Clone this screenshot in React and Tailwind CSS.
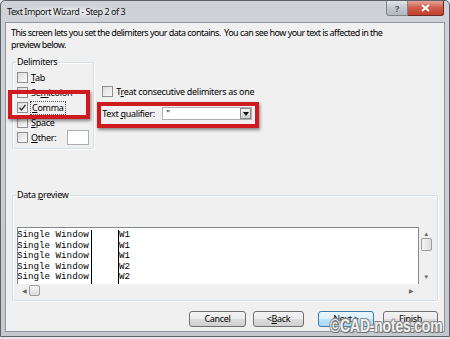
import React from "react";

function Box({ checked }) {
  return (
    <span className="w-[11px] h-[11px] shrink-0 border border-[#8f8f8f] bg-[linear-gradient(135deg,#dcdcdc,#fbfbfb)] flex items-center justify-center">
      {checked && (
        <svg width="9" height="9" viewBox="0 0 9 9">
          <path d="M1.5 4.8 L3.5 7 L7.5 1.8" stroke="#2a2a2a" strokeWidth="1.3" fill="none" />
        </svg>
      )}
    </span>
  );
}

function Btn({ children, primary, w }) {
  return (
    <div
      className={
        "h-[16px] rounded-[3px] border flex items-center justify-center whitespace-nowrap " +
        (primary
          ? "border-[#3d7bad] bg-[linear-gradient(180deg,#eaf6fd,#d9f0fc_50%,#bee6fd_51%,#a7d9f5)]"
          : "border-[#707070] bg-[linear-gradient(180deg,#f2f2f2,#ebebeb_50%,#dddddd_51%,#cfcfcf)]")
      }
      style={{ width: w }}
    >
      {children}
    </div>
  );
}

export default function App() {
  const rows = ["W1", "W1", "W1", "W2", "W2"];
  return (
    <div className="w-[450px] h-[339px] bg-[#e4e6e8] relative overflow-hidden font-['Noto_Sans',sans-serif] text-[9px] tracking-[-0.3px] leading-[12px] text-black">
      <div className="flex flex-col w-[450px] h-[337px] border border-[#5d6268] rounded-t-[5px] bg-[linear-gradient(180deg,#cfd3d7,#c4c9ce)] px-[4px] pb-[4px]">
        {/* title bar */}
        <div className="h-[21px] flex items-start shrink-0">
          <div className="mt-[5px] ml-[0px] px-[2px] rounded-[6px] bg-[radial-gradient(ellipse_at_center,rgba(255,255,255,0.75),rgba(255,255,255,0)_75%)] text-[9px] tracking-[-0.45px] leading-[12px] text-[#111] whitespace-nowrap">
            Text Import Wizard - Step 2 of 3
          </div>
          <div className="ml-auto mr-[1px] flex">
            <div className="w-[22px] h-[15px] rounded-bl-[3px] border border-[#7c8389] border-t-0 bg-[linear-gradient(180deg,#e2e5e8,#c2c8ce_50%,#b2b9c0)] flex items-center justify-center text-[9px] leading-none text-[#555] font-bold">
              ?
            </div>
            <div className="w-[36px] h-[15px] rounded-br-[3px] border border-[#6c2a22] border-t-0 border-l-0 bg-[linear-gradient(180deg,#e6a59a,#cf5a48_50%,#c2402e)] flex items-center justify-center">
              <svg width="9" height="8" viewBox="0 0 9 8">
                <path d="M1 1 L8 7 M8 1 L1 7" stroke="#fff" strokeWidth="2" />
              </svg>
            </div>
          </div>
        </div>

        {/* client area */}
        <div className="flex-1 bg-[#f0f0f0] border border-[#8e959c] flex flex-col px-[6px]">
          <div className="mt-[4px] ml-[-1px] whitespace-nowrap tracking-[-0.55px]">
            <div>This screen lets you set the delimiters your data contains.&nbsp; You can see how your text is affected in the</div>
            <div>preview below.</div>
          </div>

          <div className="flex mt-[5px]">
            <fieldset className="w-[82px] h-[93px] border border-[#d5dfe5] rounded-[2px] px-[4px] pt-[2px] shadow-[inset_1px_1px_0_#fff,1px_1px_0_#fff]">
              <legend className="px-[1px] ml-[-1px]">Delimiters</legend>
              <div className="flex flex-col whitespace-nowrap">
                <div className="h-[15px] flex items-center gap-[3px]"><Box /><span><u>T</u>ab</span></div>
                <div className="h-[15px] flex items-center gap-[3px]"><Box /><span>Se<u>m</u>icolon</span></div>
                <div className="h-[15px] flex items-center gap-[3px]"><Box checked /><span className="outline outline-1 outline-dotted outline-[#555] px-[1px]"><u>C</u>omma</span></div>
                <div className="h-[15px] flex items-center gap-[3px]"><Box /><span><u>S</u>pace</span></div>
                <div className="h-[15px] flex items-center gap-[3px]">
                  <Box /><span><u>O</u>ther:</span>
                  <span className="ml-[8px] w-[22px] h-[15px] bg-white border border-[#abadb3]" />
                </div>
              </div>
            </fieldset>

            <div className="ml-[8px] mt-[28px] flex flex-col whitespace-nowrap">
              <div className="h-[15px] flex items-center gap-[3px]">
                <Box /><span>T<u>r</u>eat consecutive delimiters as one</span>
              </div>
              <div className="mt-[8px] h-[13px] flex items-center">
                <span className="w-[60px]">Text <u>q</u>ualifier:</span>
                <div className="w-[90px] h-[13px] bg-white border border-[#abadb3] flex items-center">
                  <span className="ml-[3px] flex-1 leading-none text-[9px]">"</span>
                  <div className="w-[11px] h-[11px] border border-[#8a8a8a] bg-[linear-gradient(180deg,#f2f2f2,#cfcfcf)] flex items-center justify-center">
                    <svg width="6" height="4" viewBox="0 0 6 4"><path d="M0 0 H6 L3 4 Z" fill="#111" /></svg>
                  </div>
                </div>
              </div>
            </div>
          </div>

          <fieldset className="mt-[40px] w-[426px] border border-[#d5dfe5] rounded-[2px] pl-[4px] pt-[26px] pb-[3px] shadow-[inset_1px_1px_0_#fff,1px_1px_0_#fff]">
            <legend className="px-[1px] ml-[-1px]">Data <u>p</u>review</legend>
            <div className="flex flex-col w-[416px]">
              <div className="flex h-[57px]">
                <div className="flex-1 bg-white border border-[#828790] border-b-0 flex font-['Liberation_Mono',monospace] text-[9.2px] tracking-normal leading-[10.5px] pt-[2px] overflow-hidden">
                  <div className="w-[74px] border-r border-black">
                    {rows.map((r, i) => (
                      <div key={i} className="whitespace-pre -ml-[1px]">Single Window</div>
                    ))}
                  </div>
                  <div className="w-[27px] border-r border-black" />
                  <div className="flex-1">
                    {rows.map((r, i) => (
                      <div key={i} className="whitespace-pre">{r}</div>
                    ))}
                  </div>
                </div>
                <div className="w-[14px] flex flex-col items-center">
                  <span className="mt-[4px] text-[6px] leading-[6px] text-[#666]">▲</span>
                  <div className="mt-[1px] w-[11px] h-[13px] rounded-[2px] border border-[#9c9c9c] bg-[linear-gradient(90deg,#f4f4f4,#dcdcdc)]" />
                  <span className="mt-auto mb-[4px] text-[6px] leading-[6px] text-[#666]">▼</span>
                </div>
              </div>
              <div className="h-[13px] flex items-center pr-[14px]">
                <span className="ml-[5px] text-[6px] leading-[6px] text-[#666]">◀</span>
                <div className="ml-[2px] w-[11px] h-[11px] rounded-[2px] border border-[#9c9c9c] bg-[linear-gradient(180deg,#f4f4f4,#dcdcdc)]" />
                <span className="ml-auto mr-[5px] text-[6px] leading-[6px] text-[#666]">▶</span>
              </div>
            </div>
          </fieldset>

          <div className="mt-[10px] flex justify-end">
            <Btn w={57}>Cancel</Btn>
            <div className="w-[7px]" />
            <Btn w={51}>&lt; <u>B</u>ack</Btn>
            <div className="w-[14px]" />
            <Btn w={56} primary><u>N</u>ext &gt;</Btn>
            <div className="w-[9px]" />
            <Btn w={55}><u>F</u>inish</Btn>
          </div>
        </div>
      </div>

      {/* red annotation boxes */}
      <div className="absolute left-[8px] top-[90px] w-[82px] h-[29px] border-[4px] border-[#cf1b20] shadow-[1px_2px_3px_rgba(0,0,0,0.45)]" />
      <div className="absolute left-[97px] top-[102px] w-[162px] h-[26px] border-[4px] border-[#cf1b20] shadow-[1px_2px_3px_rgba(0,0,0,0.45)]" />

      {/* watermark */}
      <div className="absolute left-[330px] top-[316px] origin-left scale-x-[0.78] whitespace-nowrap font-['Liberation_Sans',sans-serif] font-bold text-[18px] leading-[20px] text-white/90 tracking-[-0.3px] [text-shadow:1px_1px_0_#6a6a6a,-1px_-1px_0_#8a8a8a,1px_-1px_0_#8a8a8a,-1px_1px_0_#8a8a8a]">
        ©CAD-notes.com
      </div>
    </div>
  );
}
